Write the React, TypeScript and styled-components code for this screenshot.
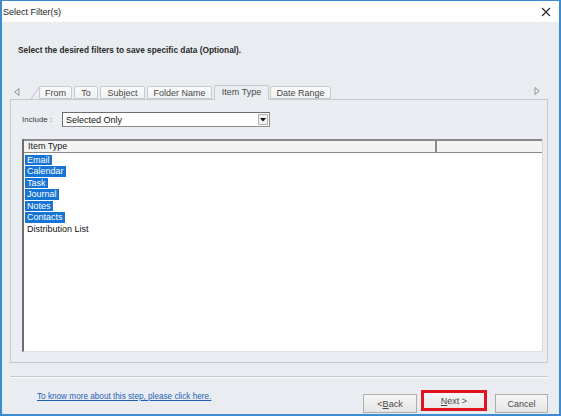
import styled, { createGlobalStyle } from "styled-components";

const GlobalStyle = createGlobalStyle`
  html, body {
    margin: 0;
    padding: 0;
    background: #ffffff;
  }
  body {
    font-family: "Liberation Sans", Arial, sans-serif;
  }
`;

const items = [
  { name: "Email", selected: true },
  { name: "Calendar", selected: true },
  { name: "Task", selected: true },
  { name: "Journal", selected: true },
  { name: "Notes", selected: true },
  { name: "Contacts", selected: true },
  { name: "Distribution List", selected: false },
];

const tabs = [
  { label: "From", width: 33 },
  { label: "To", width: 24 },
  { label: "Subject", width: 45 },
  { label: "Folder Name", width: 65 },
  { label: "Item Type", width: 55, active: true },
  { label: "Date Range", width: 61 },
];

const App = () => {
  return (
    <>
      <GlobalStyle />
      <Window>
        <TitleBar>
          <Title>Select Filter(s)</Title>
          <CloseButton>
            <svg width="10" height="10" viewBox="0 0 10 10">
              <path d="M1 1 L9 9 M9 1 L1 9" stroke="#2b2b2b" strokeWidth="1.2" />
            </svg>
          </CloseButton>
        </TitleBar>
        <Body>
          <Heading>Select the desired filters to save specific data (Optional).</Heading>
          <TabStrip>
            <ScrollArrow>
              <svg width="6" height="8" viewBox="0 0 6 8">
                <path d="M5 0.5 L0.8 4 L5 7.5 Z" fill="none" stroke="#8a8a8a" strokeWidth="0.9" />
              </svg>
            </ScrollArrow>
            <TabSlant>
              <svg width="9" height="13" viewBox="0 0 9 13">
                <path d="M0 13 L8.5 0.5" stroke="#c4c4c4" strokeWidth="1" />
              </svg>
            </TabSlant>
            {tabs.map((t) => (
              <Tab key={t.label} $width={t.width} $active={!!t.active}>
                {t.label}
              </Tab>
            ))}
            <RightArrow>
              <svg width="6" height="8" viewBox="0 0 6 8">
                <path d="M1 0.5 L5.2 4 L1 7.5 Z" fill="none" stroke="#8a8a8a" strokeWidth="0.9" />
              </svg>
            </RightArrow>
          </TabStrip>
          <Panel>
            <IncludeRow>
              <FieldLabel>Include :</FieldLabel>
              <Combo>
                <ComboText>Selected Only</ComboText>
                <ComboButton>
                  <svg width="6" height="4" viewBox="0 0 6 4">
                    <path d="M0 0 L6 0 L3 3.5 Z" fill="#111" />
                  </svg>
                </ComboButton>
              </Combo>
            </IncludeRow>
            <List>
              <ListHeader>
                <HeaderCell $width={413}>Item Type</HeaderCell>
                <HeaderCell $width={0}></HeaderCell>
              </ListHeader>
              <Rows>
                {items.map((it) => (
                  <Row key={it.name}>
                    <RowLabel $selected={it.selected}>{it.name}</RowLabel>
                  </Row>
                ))}
              </Rows>
            </List>
          </Panel>
          <Separator />
          <Footer>
            <HelpLink href="#">To know more about this step, please click here.</HelpLink>
            <Buttons>
              <DialogButton $width={54}>
                &lt; <u>B</u>ack
              </DialogButton>
              <NextButton>
                <u>N</u>ext &gt;
              </NextButton>
              <DialogButton $width={53} $gap={8}>
                Cancel
              </DialogButton>
            </Buttons>
          </Footer>
        </Body>
      </Window>
    </>
  );
};

const Window = styled.div`
  width: 561px;
  height: 416px;
  box-sizing: border-box;
  border: 2px solid #3d8bd0;
  border-top-width: 1px;
  display: flex;
  flex-direction: column;
  background: #e9edf1;
  overflow: hidden;
`;

const TitleBar = styled.div`
  height: 21px;
  background: #ffffff;
  display: flex;
  align-items: center;
  justify-content: space-between;
  padding: 0 8px 0 1px;
`;

const Title = styled.span`
  font-size: 9px;
  color: #1a1a1a;
`;

const CloseButton = styled.span`
  display: flex;
  align-items: center;
`;

const Body = styled.div`
  flex: 1;
  display: flex;
  flex-direction: column;
  padding: 0 11px 0 8px;
`;

const Heading = styled.div`
  margin: 22px 0 0 8px;
  font-size: 8.3px;
  line-height: 12px;
  font-weight: bold;
  color: #2a2a2a;
`;

const TabStrip = styled.div`
  margin-top: 29px;
  height: 14px;
  display: flex;
  align-items: flex-end;
  position: relative;
  z-index: 1;
`;

const ScrollArrow = styled.span`
  display: flex;
  align-self: center;
  margin: 0 11px 0 4px;
`;

const RightArrow = styled(ScrollArrow)`
  margin: -3px 8px 0 auto;
`;

const TabSlant = styled.span`
  display: flex;
  margin-right: -1px;
`;

const Tab = styled.div<{ $width: number; $active: boolean }>`
  width: ${(p) => p.$width}px;
  height: ${(p) => (p.$active ? 15 : 13)}px;
  margin-right: ${(p) => (p.$active ? 1 : 2)}px;
  margin-bottom: ${(p) => (p.$active ? -1 : 0)}px;
  box-sizing: border-box;
  border: 1px solid #c6c9cd;
  border-bottom: ${(p) => (p.$active ? "none" : "1px solid #c6c9cd")};
  border-radius: 2px 2px 0 0;
  background: ${(p) => (p.$active ? "#eaeef2" : "linear-gradient(#fbfbfb, #eff1f3)")};
  font-size: 9px;
  line-height: 12px;
  color: #4a4a4a;
  text-align: center;
  white-space: nowrap;
`;

const Panel = styled.div`
  height: 264px;
  box-sizing: border-box;
  border: 1px solid #c6c9cd;
  background: #eaeef2;
  display: flex;
  flex-direction: column;
  padding: 12px 4px 0 11px;
`;

const IncludeRow = styled.div`
  display: flex;
  align-items: center;
  height: 15px;
`;

const FieldLabel = styled.span`
  width: 40px;
  font-size: 8px;
  color: #3a3a3a;
`;

const Combo = styled.div`
  width: 208px;
  height: 15px;
  box-sizing: border-box;
  border: 1px solid #8c8c8c;
  border-top-color: #6e6e6e;
  border-left-color: #6e6e6e;
  background: #ffffff;
  display: flex;
  align-items: center;
  justify-content: space-between;
  padding: 0 1px 0 3px;
`;

const ComboText = styled.span`
  font-size: 9px;
  color: #111;
`;

const ComboButton = styled.span`
  width: 10px;
  height: 11px;
  box-sizing: border-box;
  border: 1px solid #b4b4b4;
  background: #f1f1f1;
  display: flex;
  align-items: center;
  justify-content: center;
`;

const List = styled.div`
  margin-top: 12px;
  height: 213px;
  box-sizing: border-box;
  background: #ffffff;
  border-left: 2px solid #6d6d6d;
  border-right: 1px solid #d5d8dc;
  border-bottom: 1px solid #dde0e3;
  display: flex;
  flex-direction: column;
`;

const ListHeader = styled.div`
  height: 14px;
  box-sizing: border-box;
  border-top: 2px solid #8a8a8a;
  border-bottom: 1px solid #8a8a8a;
  background: #f3f3f3;
  display: flex;
`;

const HeaderCell = styled.div<{ $width: number }>`
  ${(p) => (p.$width ? `width: ${p.$width}px;` : "flex: 1;")}
  box-sizing: border-box;
  border-right: ${(p) => (p.$width ? "2px solid #8a8a8a" : "none")};
  padding-left: 4px;
  font-size: 9px;
  line-height: 11px;
  color: #222;
`;

const Rows = styled.div`
  padding: 1px 0 0 1px;
  display: flex;
  flex-direction: column;
`;

const Row = styled.div`
  height: 11.5px;
  display: flex;
  align-items: center;
`;

const RowLabel = styled.span<{ $selected: boolean }>`
  font-size: 9px;
  line-height: 10.5px;
  padding: 0 2px;
  color: ${(p) => (p.$selected ? "#ffffff" : "#111111")};
  background: ${(p) => (p.$selected ? "#1574d4" : "transparent")};
`;

const Separator = styled.div`
  margin-top: 13px;
  height: 0;
  border-top: 1px solid #c4c8cc;
  border-bottom: 1px solid #fbfcfd;
`;

const Footer = styled.div`
  margin-top: 13px;
  display: flex;
  align-items: flex-end;
  justify-content: space-between;
  height: 22px;
`;

const HelpLink = styled.a`
  margin: 0 0 12px 27px;
  font-size: 8.2px;
  color: #1d5fb8;
  text-decoration: underline;
`;

const Buttons = styled.div`
  display: flex;
  align-items: flex-end;
`;

const DialogButton = styled.div<{ $width: number; $gap?: number }>`
  width: ${(p) => p.$width}px;
  height: 19px;
  margin-left: ${(p) => p.$gap ?? 0}px;
  box-sizing: border-box;
  border: 1px solid #adadad;
  background: linear-gradient(#f6f6f6, #e6e6e6);
  display: flex;
  align-items: center;
  justify-content: center;
  font-size: 9px;
  color: #4a4a4a;
`;

const NextButton = styled.div`
  width: 66px;
  height: 21px;
  margin: 0 0 2px 4px;
  box-sizing: border-box;
  border: 3px solid #e0141e;
  background: linear-gradient(#f6f6f6, #e9e9e9);
  display: flex;
  align-items: center;
  justify-content: center;
  font-size: 9px;
  color: #4a4a4a;
`;

export default App;
